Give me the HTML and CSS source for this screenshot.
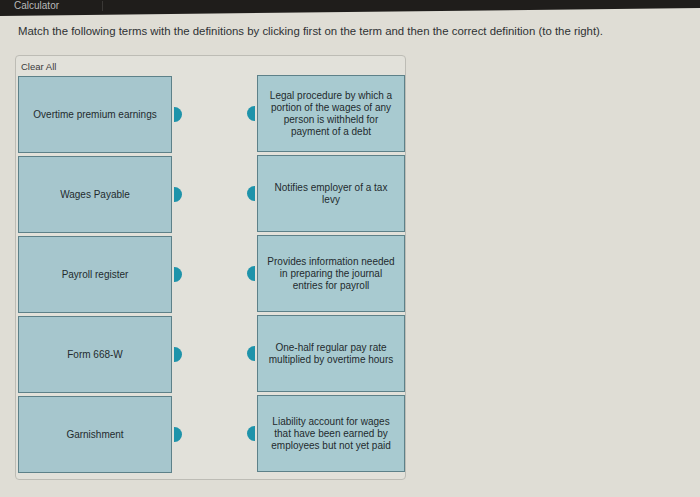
FILE: index.html
```html
<!DOCTYPE html>
<html>
<head>
    <title>Matching</title>
    <meta charset="utf-8">
    <link rel="stylesheet" href="styles.css">
</head>
<body>
    <div class="topbar">
        <span class="tool">Calculator</span>
    </div>

    <p class="prompt">Match the following terms with the definitions by clicking first on the term and then the correct definition (to the right).</p>

    <div class="board">
        <div class="clear">Clear All</div>
        <div class="pairs">
            <div class="terms">
                <div class="term"><div class="card">Overtime premium earnings</div><span class="knob"></span></div>
                <div class="term"><div class="card">Wages Payable</div><span class="knob"></span></div>
                <div class="term"><div class="card">Payroll register</div><span class="knob"></span></div>
                <div class="term"><div class="card">Form 668-W</div><span class="knob"></span></div>
                <div class="term"><div class="card">Garnishment</div><span class="knob"></span></div>
            </div>
            <div class="defs">
                <div class="def"><span class="knob"></span><div class="card">Legal procedure by which a<br>portion of the wages of any<br>person is withheld for<br>payment of a debt</div></div>
                <div class="def"><span class="knob"></span><div class="card">Notifies employer of a tax<br>levy</div></div>
                <div class="def"><span class="knob"></span><div class="card">Provides information needed<br>in preparing the journal<br>entries for payroll</div></div>
                <div class="def"><span class="knob"></span><div class="card">One-half regular pay rate<br>multiplied by overtime hours</div></div>
                <div class="def"><span class="knob"></span><div class="card">Liability account for wages<br>that have been earned by<br>employees but not yet paid</div></div>
            </div>
        </div>
    </div>
</body>
</html>
```

FILE: styles.css
```css
body {
    margin: 0;
    background-color: #dfddd5;
    font-family: "Liberation Sans", Arial, sans-serif;
    font-size: 10px;
    color: #232b2e;
}
.topbar {
    height: 16px;
    background-color: #1f1d1b;
    clip-path: polygon(0 0, 100% 0, 100% 8px, 0 16px);
}
.tool {
    display: inline-block;
    width: 88px;
    padding-left: 14px;
    line-height: 10px;
    color: #b9b9b9;
    border-right: 1px solid #3a3836;
}
.prompt {
    margin: 9px 0 0 18px;
    line-height: 13px;
    font-size: 11.4px;
    color: #2e3133;
}
.board {
    width: 389px;
    height: 423px;
    margin: 17px 0 0 15px;
    border: 1px solid #bdbcb5;
    border-radius: 4px;
    background-color: #e2e1da;
}
.clear {
    height: 19px;
    padding-left: 5px;
    line-height: 21px;
    font-size: 9.5px;
    color: #3a3a3a;
}
.pairs {
    display: flex;
    justify-content: space-between;
    padding: 1px 0 0 2px;
}
.terms, .defs {
    display: flex;
    flex-direction: column;
    gap: 3px;
}
.term, .def {
    display: flex;
    align-items: center;
}
.card {
    display: flex;
    align-items: center;
    justify-content: center;
    height: 75px;
    padding: 0 10px;
    border: 1px solid #5d8189;
    background-color: #a6c6cd;
    text-align: center;
    line-height: 12px;
}
.term .card {
    width: 132px;
}
.def {
    margin-top: -1px;
    margin-bottom: 1px;
}
.def .card {
    width: 136px;
    padding: 0 5px;
    background-color: #a8cad0;
}
.knob {
    width: 8px;
    height: 15px;
    background-color: #1e93aa;
}
.term .knob {
    margin-left: 2px;
    border-radius: 0 8px 8px 0;
}
.def .knob {
    margin-right: 2px;
    border-radius: 8px 0 0 8px;
}
```
